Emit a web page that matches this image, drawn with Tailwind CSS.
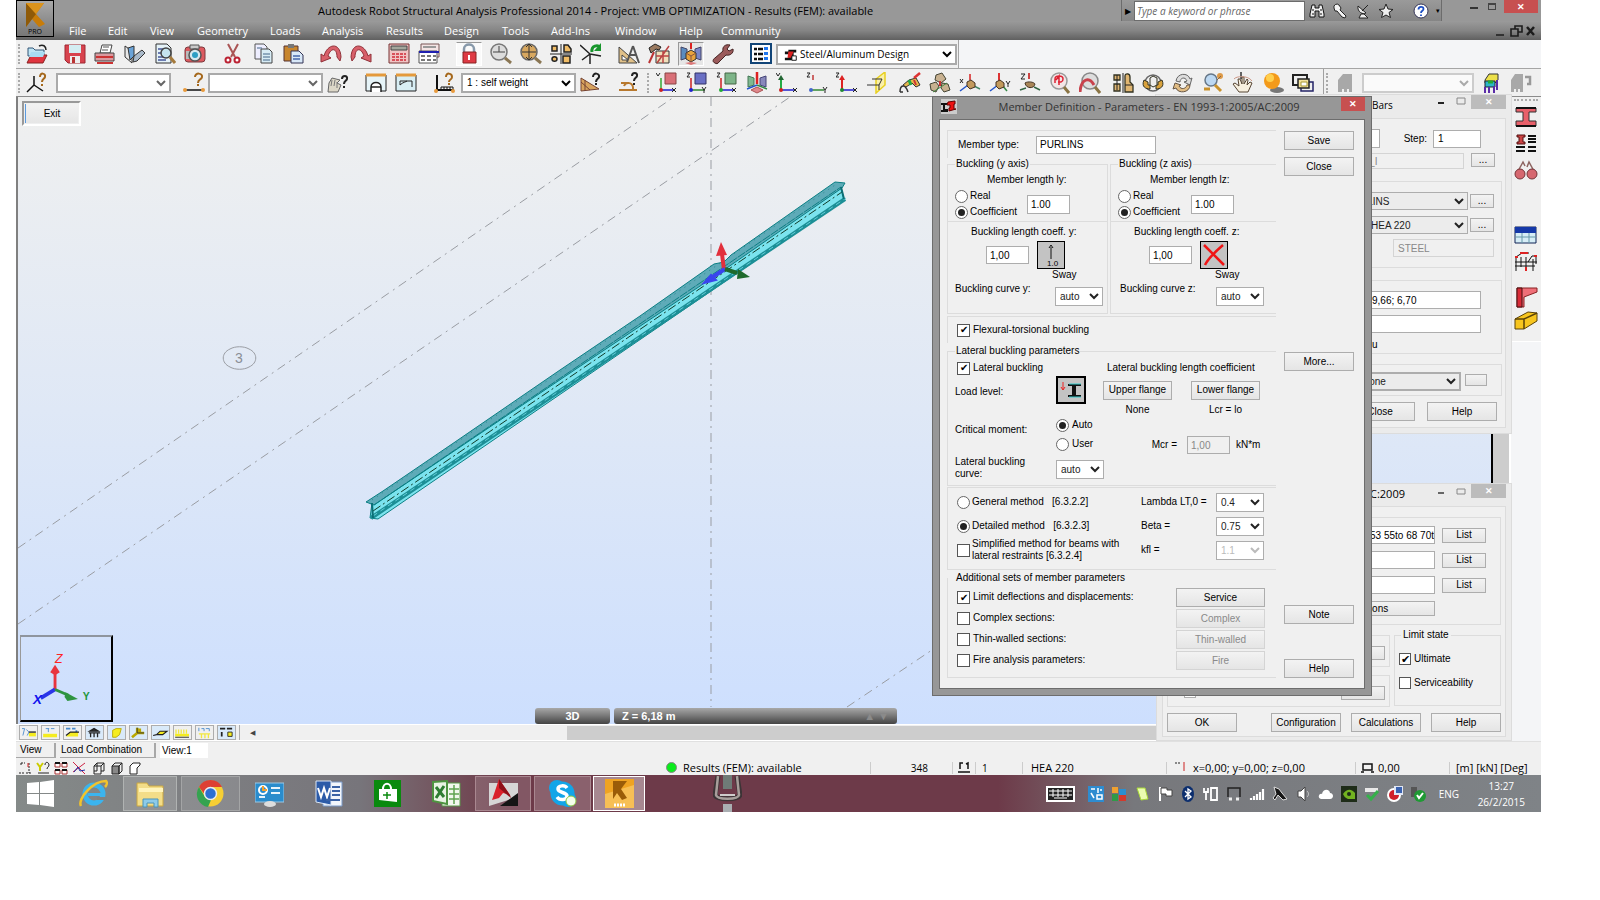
<!DOCTYPE html>
<html lang="en">
<head>
  <meta charset="UTF-8" />
  <meta name="viewport" content="width=device-width, initial-scale=1.0" />
  <title>Autodesk Robot Structural Analysis Professional 2014</title>
  <script src="https://cdn.jsdelivr.net/npm/@tailwindcss/browser@4"></script>
</head>
<body class="bg-white">
<div class="relative ml-4 mr-[59px] overflow-hidden bg-[#f0f0f0] font-['Liberation_Sans',Arial,sans-serif] text-[10px] leading-3 text-black">

  <!-- Title bar -->
  <header class="relative bg-[#989898] font-['Open_Sans','Noto_Sans',sans-serif]">
    <div class="flex h-[21px] items-center">
      <h1 class="flex-1 whitespace-nowrap pl-[302px] text-[11px]">Autodesk Robot Structural Analysis Professional 2014 - Project: VMB OPTIMIZATION - Results (FEM): available</h1>
      <div class="flex h-[21px] w-[321px] items-center border-x border-[#6c6c6c] bg-linear-to-b from-[#9a9a9a] to-[#858585]">
        <span class="w-3 text-center text-[8px]">&#9654;</span>
        <input type="text" aria-label="Search" placeholder="Type a keyword or phrase" class="h-[20px] w-[171px] border border-[#6c6c6c] bg-white px-0.5 text-[10px] italic placeholder:text-[#666]" />
        <div class="flex flex-1 items-center gap-[7px] pl-1 [&>svg]:size-4">
          <svg viewBox="0 0 16 16"><path d="M3 2h3v3h4V2h3l2 9v3h-5V8H6v6H1v-3z" fill="#eee" stroke="#111"/><path d="M3 7h2M11 7h2M3 11h2M11 11h2" stroke="#111"/></svg>
          <svg viewBox="0 0 16 16"><path d="M2 5a3 3 0 0 1 5-3l2 3-1 2 6 6-1 2-3-1-5-6-2 0z" fill="#f4f4f4" stroke="#222"/></svg>
          <svg viewBox="0 0 16 16"><path d="M3 3l8 7c-3 2-9-1-8-7z" fill="#eee" stroke="#222"/><path d="M7 8l6-6" stroke="#222"/><path d="M6 11l-2 4h9l-4-4z" fill="#eee" stroke="#222"/></svg>
          <svg viewBox="0 0 16 16"><path d="M8 1l2 5 5 .5-4 3 1.500 5L8 12l-4.500 2.500L5 9.500l-4-3L6 6z" fill="#eee" stroke="#222"/></svg>
          <svg viewBox="0 0 16 16" class="ml-3"><circle cx="8" cy="8" r="7" fill="#fff" stroke="#335"/><path d="M5.500 6.500C5.500 3 10.500 3 10.500 6c0 2-2.500 1.500-2.500 4M8 11.500v1.500" fill="none" stroke="#1d4fc4" stroke-width="1.800"/></svg>
          <span class="text-[7px]">&#9662;</span>
        </div>
      </div>
      <div class="flex h-[21px] w-[99px] items-start pl-6">
        <button aria-label="Minimize" class="h-4 w-4"><span class="mx-auto mt-0 block h-0.5 w-2 bg-[#333]"></span></button>
        <button aria-label="Maximize" class="h-4 w-5"><span class="mx-auto mb-1 block h-[7px] w-2 border border-t-2 border-[#444]"></span></button>
        <button aria-label="Close" class="ml-[2px] h-[13px] w-[34px] bg-[#c75050] text-[9px] leading-3 font-bold text-white">&#10005;</button>
      </div>
    </div>
    <nav class="flex h-[19px] items-center bg-linear-to-b from-[#9a9a9a] via-[#858585] to-[#606060] pl-[53px] text-[11px] text-white">
      <a href="#" class="w-[39px]">File</a><a href="#" class="w-[42px]">Edit</a><a href="#" class="w-[47px]">View</a><a href="#" class="w-[73px]">Geometry</a><a href="#" class="w-[52px]">Loads</a><a href="#" class="w-[64px]">Analysis</a><a href="#" class="w-[58px]">Results</a><a href="#" class="w-[58px]">Design</a><a href="#" class="w-[49px]">Tools</a><a href="#" class="w-[64px]">Add-Ins</a><a href="#" class="w-[64px]">Window</a><a href="#" class="w-[42px]">Help</a><a href="#" class="flex-1">Community</a>
      <svg class="mr-[5px] h-3 w-10" viewBox="0 0 40 12"><path d="M0 10h8M15 4h7v7h-7zM19 4V1h7v6h-4" fill="none" stroke="#1c1c1c" stroke-width="1.600"/><path d="M31 2l7 8M38 2l-7 8" stroke="#1c1c1c" stroke-width="2.500"/></svg>
    </nav>
    <div class="absolute top-0 left-0 flex h-[37px] w-[38px] flex-col items-center border border-black bg-linear-to-b from-[#aaa] to-[#777]">
      <svg class="mt-0.5 h-[25px] w-6" viewBox="0 0 24 25"><path d="M3 0h18L13 11l9 10-6 3-7-8-6 8z" fill="#c87c08"/><path d="M3 0l10 11-10 13z" fill="#8f5a08"/><path d="M21 0h-9l-9 0 10 11z" fill="#dc941c"/></svg>
      <span class="text-[7px] leading-[8px]">PRO</span>
    </div>
  </header>

  <!-- Standard toolbar -->
  <div class="flex h-[29px] items-center border-b border-[#a5a5a5] bg-[#f4f5f7]">
    <div class="flex h-[28px] items-center gap-4 border-r border-[#a5a5a5] bg-[#f0f0f0] pr-px [&_svg]:size-[22px] [&_svg]:shrink-0">
      <span class="-mr-2.5 ml-0.5 h-5 w-0.5 border-l-2 border-dotted border-[#aaa]"></span>
      <svg viewBox="0 0 22 22"><path d="M2 5h5l2 2h9v6H2z" fill="#bfe6f5" stroke="#357"/><path d="M1 20l4-8h16l-4 8z" fill="#e0353f" stroke="#822"/><path d="M5 9h14l-2 5H3z" fill="#a9dcf2"/><path d="M13 3c4-2 7 0 7 4" fill="none" stroke="#222" stroke-width="1.500"/></svg>
      <div class="flex gap-2">
        <svg viewBox="0 0 22 22"><path d="M1 2h20v18H4l-3-3z" fill="#d8434e" stroke="#9c2832"/><path d="M5 2h12v8H5z" fill="#d4edf2"/><path d="M6 13h10v7H6z" fill="#eee"/><path d="M8 14h3v6H8z" fill="#b33"/></svg>
        <svg viewBox="0 0 22 22"><path d="M6 10l2-8h10l-2 8z" fill="#fff" stroke="#444"/><path d="M9 4h6M8 7h6" stroke="#555"/><path d="M1 10h19v8H1z" fill="#d99aa0" stroke="#444"/><path d="M2 14h17M3 20h16" stroke="#c33" stroke-width="2"/></svg>
        <svg viewBox="0 0 22 22"><path d="M1 3l7 5v12L1 14z" fill="#e8e8e8" stroke="#333"/><path d="M4 5l6-2v10l-4 4z" fill="#6aa3d8" stroke="#333"/><path d="M10 13l8-6 3 3-8 8-4 1z" fill="#a9b9c9" stroke="#333"/></svg>
        <svg viewBox="0 0 22 22"><path d="M2 1h11l4 4v15H2z" fill="#e5f2f8" stroke="#333"/><path d="M4 6h8M4 10h7M4 14h8M4 17h8" stroke="#459" stroke-width="1.500"/><circle cx="12" cy="10" r="5" fill="#c5e4ee" stroke="#444" stroke-width="1.500"/><path d="M16 14l5 6" stroke="#a57a3c" stroke-width="3"/></svg>
        <svg viewBox="0 0 22 22"><rect x="1" y="4" width="20" height="15" rx="3" fill="#dc5a60" stroke="#7c3a3e"/><path d="M6 2h9v4H6z" fill="#c9c9c9" stroke="#555"/><path d="M2 8h4v8H2z" fill="#bbb"/><circle cx="11" cy="12" r="6" fill="#d6e9ef" stroke="#555" stroke-width="1.500"/><circle cx="11" cy="12" r="3" fill="#2c9fc4"/></svg>
      </div>
      <div class="flex gap-2">
        <svg viewBox="0 0 22 22"><path d="M6 1l7 13M16 1L9 14" stroke="#a55" stroke-width="2"/><circle cx="6" cy="17" r="2.500" fill="#fff" stroke="#b23" stroke-width="2"/><circle cx="15" cy="17" r="2.500" fill="#fff" stroke="#b23" stroke-width="2"/></svg>
        <svg viewBox="0 0 22 22"><path d="M3 1h9l3 3v12H3z" fill="#eef" stroke="#555"/><path d="M9 6h8l3 3v11H9z" fill="#d8ecf5" stroke="#444"/><path d="M11 11h7M11 14h7M11 17h7M5 5h5" stroke="#468"/></svg>
        <svg viewBox="0 0 22 22"><path d="M2 3h14v15H2z" fill="#c8862e" stroke="#533"/><path d="M6 1h6v4H6z" fill="#777"/><path d="M9 8h8l4 4v8H9z" fill="#d8e8f8" stroke="#335"/><path d="M11 13h7M11 16h7" stroke="#46a" stroke-width="1.500"/></svg>
      </div>
      <div class="flex gap-2">
        <svg viewBox="0 0 22 22"><path d="M1 19v-8l3 2C7 1 20-2 21 14l-1 4-3-4C17 5 11 4 8 13l3 2z" fill="#d8606a" stroke="#903038"/></svg>
        <svg viewBox="0 0 22 22"><path d="M21 19v-8l-3 2C15 1 2-2 1 14l1 4 3-4C5 5 11 4 14 13l-3 2z" fill="#d8606a" stroke="#903038"/></svg>
      </div>
      <div class="flex gap-2">
        <svg viewBox="0 0 22 22"><path d="M1 1h20v19H1z" fill="#f0c4c4" stroke="#733"/><path d="M3 3h16v4H3z" fill="#a4a69c" stroke="#444"/><path d="M4 11h14M4 14h14M4 17h14" stroke="#d8505a" stroke-width="2" stroke-dasharray="3 1"/></svg>
        <svg viewBox="0 0 22 22"><path d="M3 1h18v13H3z" fill="#f4e4e4" stroke="#755"/><path d="M5 4h13" stroke="#999" stroke-width="2"/><path d="M1 8h18v12H1z" fill="#fff" stroke="#555"/><path d="M1 9h20" stroke="#2020b0" stroke-width="2"/><path d="M3 13h15M3 17h15" stroke="#777" stroke-width="2" stroke-dasharray="4 2"/></svg>
      </div>
      <div class="flex items-center gap-2">
        <button aria-label="Lock results" class="flex h-6 w-[26px] items-center justify-center border border-white border-t-[#999] bg-[#fafafa]"><svg viewBox="0 0 22 22"><path d="M6 10V6c0-6 10-6 10 0v4" fill="none" stroke="#89a" stroke-width="2.500"/><path d="M5 9h13v11H5z" fill="#de3a44" stroke="#822"/><path d="M11 12v5" stroke="#fff" stroke-width="2"/></svg></button>
        <svg viewBox="0 0 22 22"><circle cx="9" cy="9" r="8" fill="#dcdcdc" stroke="#777" stroke-width="1.500"/><path d="M3 9h12M9 3v6" stroke="#444"/><path d="M15 15l6 5" stroke="#8a7654" stroke-width="3"/></svg>
        <svg viewBox="0 0 22 22"><circle cx="9" cy="9" r="8" fill="#d8a860" stroke="#666" stroke-width="1.500"/><path d="M2 9h14M9 2v14M6 4l3-3 3 3M6 14l3 3 3-3" fill="none" stroke="#333"/><path d="M15 15l6 5" stroke="#8a7654" stroke-width="3"/></svg>
        <svg viewBox="0 0 22 22"><path d="M2 3h5v5H2zM14 2h4l3 4v3h-7zM2 16c0-3 5-3 5 0s-5 3-5 0zM13 13h7v7h-7z" fill="#f1bd67" stroke="#222" stroke-width="1.500"/><path d="M0 11h22M11 1v20" stroke="#222"/></svg>
        <svg viewBox="0 0 22 22"><path d="M0 2l10 9v10M10 11L21 13M10 11L2 17" fill="none" stroke="#222" stroke-width="1.500"/><path d="M12 9c-1-7 6-7 8-5" fill="none" stroke="#18962c" stroke-width="3"/><path d="M21 0v8h-7z" fill="#18962c"/></svg>
      </div>
      <div class="flex items-center gap-2">
        <svg viewBox="0 0 22 22"><path d="M1 4v16h18z" fill="#e0c088" stroke="#444"/><path d="M4 12v5h6z" fill="#fff" stroke="#444"/><path d="M15 3l-6 16M15 3l6 17M12 12h6" fill="none" stroke="#555" stroke-width="2"/></svg>
        <svg viewBox="0 0 22 22"><path d="M8 8h13v12H8z" fill="#f1dfbb" stroke="#333"/><path d="M9 20L21 3M8 13h13M15 8v12" stroke="#b44" stroke-width="1.500"/><path d="M1 5l6-4 6 3-2 3-3-1-5 4z" fill="#9a7a60" stroke="#222"/><path d="M6 9L1 20" stroke="#b33" stroke-width="2"/></svg>
        <button aria-label="Display" class="flex h-6 w-[26px] items-center justify-center border border-white border-t-[#999] border-l-[#999] bg-[#e6e6e6]"><svg viewBox="0 0 22 22"><path d="M1 4l6 2v9l-6 2z" fill="#5a8cc0" stroke="#446"/><path d="M21 4l-6 2v9l6 2z" fill="#7a86c8" stroke="#446"/><path d="M6 10l5-3 5 3v6l-5 3-5-3z" fill="#e8a33c" stroke="#333"/><path d="M11 13v6M6 10l5 3 5-3" fill="none" stroke="#854"/><path d="M11 0v6" stroke="#d22" stroke-width="2"/><path d="M5 20l6-1 6 1-6 2z" fill="#d77"/></svg></button>
        <svg viewBox="0 0 22 22"><path d="M3 20c-3-1-2-4 0-5l8-7c-1-5 3-7 7-6l-3 4 2 2 4-2c1 4-3 7-7 6l-7 7c-1 2-3 2-4 1z" fill="#9b5a5a" stroke="#422"/></svg>
      </div>
      <div class="flex items-center gap-1">
        <svg viewBox="0 0 22 22"><path d="M1 1h20v19H1z" fill="#fff" stroke="#147" stroke-width="2"/><path d="M4 6h3M4 11h3M4 16h3M8 6h5M8 11h5M8 16h5" stroke="#111" stroke-width="2.500"/><path d="M16 4v14" stroke="#27e" stroke-width="4" stroke-dasharray="3 2"/></svg>
        <div class="relative">
          <select aria-label="Layout" class="h-[21px] w-[181px] border-2 border-[#aaa] bg-white pl-[18px] font-['Open_Sans',sans-serif] text-[10px]"><option>Steel/Aluminum Design</option></select>
          <svg class="absolute top-0 left-1 p-1" viewBox="0 0 16 16"><path d="M5 2h9v3h-3v4l3 1v4H1v-3h4V7H1V4h4z" fill="#111"/><path d="M5 4h6l-3 7H4z" fill="#d22"/><path d="M9 9h5v5H9z" fill="#fff" stroke="#111"/></svg>
        </div>
      </div>
    </div>
  </div>

  <!-- Selection and view toolbar -->
  <div class="flex h-7 items-center border-b border-[#8b8b8b] bg-[#f0f0f0] [&_svg]:size-[22px] [&_svg]:shrink-0">
    <span class="mr-1.5 ml-0.5 h-5 w-0.5 border-l-2 border-dotted border-[#aaa]"></span>
    <svg viewBox="0 0 22 22"><path d="M8 4v9l-7 7M8 13l9 6" fill="none" stroke="#111" stroke-width="1.500"/><path d="M14 5c0-5 6-4 5 0-.5 2-3 2-3 5M16 12v2" fill="none" stroke="#a5681c" stroke-width="2"/></svg>
    <select aria-label="Nodes" class="ml-2 h-[20px] w-[115px] border-2 border-[#aaa] bg-white text-[10px] text-[#666]"><option></option></select>
    <svg class="ml-3" viewBox="0 0 22 22"><path d="M2 18h18" stroke="#111" stroke-width="1.500"/><circle cx="2" cy="18" r="2" fill="#e89a3c"/><circle cx="20" cy="18" r="2" fill="#e89a3c"/><path d="M12 5c0-5 8-4 7 0-.5 3-4 2-4 6M15 12v2" fill="none" stroke="#a5681c" stroke-width="2"/></svg>
    <select aria-label="Bars" class="ml-[3px] h-[20px] w-[115px] border-2 border-[#aaa] bg-white text-[10px] text-[#666]"><option></option></select>
    <svg class="ml-1" viewBox="0 0 22 22"><path d="M1 20l1-9 3-5 8 2-3 3 4 2-3 7z" fill="#ddd8c8" stroke="#666"/><path d="M5 8l-1 6M8 8l-1 6M10 10v6" stroke="#777"/><path d="M15 7c0-4 6-4 5 0-.5 2-3 2-3 5M17 14v2" fill="none" stroke="#222" stroke-width="2"/></svg>
    <svg class="ml-4" viewBox="0 0 22 22"><path d="M1 3h20v16H1z" fill="#e6f4f8" stroke="#222"/><path d="M1 3h20" stroke="#e49a3c" stroke-width="3"/><path d="M6 20v-5c0-6 10-6 10 0v5M6 15h10" fill="#fff" stroke="#222" stroke-width="1.500"/></svg>
    <svg class="ml-2" viewBox="0 0 22 22"><path d="M1 3h20v16H1z" fill="#d8eef4" stroke="#222"/><path d="M1 3h20" stroke="#e49a3c" stroke-width="3"/><path d="M5 13V9h12v6M5 13c3-3 6-3 7-4" fill="none" stroke="#222"/></svg>
    <svg class="ml-4" viewBox="0 0 22 22"><path d="M4 3v15h17" fill="none" stroke="#111" stroke-width="2"/><path d="M8 15h12v3H8zM11 15v4M14 15v4M17 15v4" stroke="#111" fill="none"/><circle cx="3" cy="19" r="2" fill="#e89a3c"/><circle cx="20" cy="19" r="2" fill="#e89a3c"/><path d="M13 5c0-5 6-4 6 0 0 3-3 2-3 5M16 11v2" fill="none" stroke="#a5681c" stroke-width="2"/></svg>
    <select aria-label="Load case" class="ml-1.5 h-[20px] w-[115px] border-2 border-[#aaa] bg-white text-[10px]"><option>1 : self weight</option></select>
    <svg class="ml-1" viewBox="0 0 22 22"><path d="M1 6l18 11-18 2z" fill="#d8a45e" stroke="#743"/><path d="M1 10l9 8M5 8v11" stroke="#743"/><path d="M13 5c0-5 7-4 6 0-.5 2-3 2-3 5M16 11v2" fill="none" stroke="#222" stroke-width="2"/></svg>
    <svg class="ml-4" viewBox="0 0 22 22"><path d="M1 18h18M6 14c2-5 10-4 9 4M3 11h8" fill="none" stroke="#b8792e" stroke-width="2"/><path d="M14 4c0-4 6-4 5 0-.5 2-3 2-3 5M16 11v2" fill="none" stroke="#222" stroke-width="2"/></svg>
    <span class="mx-[7px] h-5 w-0.5 border-l-2 border-dotted border-[#aaa]"></span>
    <div class="flex flex-1 gap-[11px]">
      <div class="flex gap-2">
        <svg viewBox="0 0 22 22"><path d="M9 1h11v11H9z" fill="#d97078" stroke="#844"/><path d="M5 6v12" stroke="#3a3" stroke-width="1.500"/><path d="M5 18h14" stroke="#22c" stroke-width="1.500"/><path d="M0 1l2 3 2-3M16 16l4 4M20 16l-4 4" fill="none" stroke="#222"/><circle cx="5" cy="18" r="2" fill="#c22"/></svg>
        <svg viewBox="0 0 22 22"><path d="M9 1h11v11H9z" fill="#6a6fc4" stroke="#336"/><path d="M5 6v12" stroke="#c22" stroke-width="1.500"/><path d="M5 18h14" stroke="#383" stroke-width="1.500"/><path d="M1 1h3l-3 4h3M16 15l2 3 2-3M18 18v3" fill="none" stroke="#222"/><circle cx="5" cy="18" r="2" fill="#22c"/></svg>
        <svg viewBox="0 0 22 22"><path d="M9 1h11v11H9z" fill="#7db488" stroke="#464"/><path d="M5 6v12" stroke="#c22" stroke-width="1.500"/><path d="M5 18h14" stroke="#22c" stroke-width="1.500"/><path d="M1 1h3l-3 4h3M16 16l4 4M20 16l-4 4" fill="none" stroke="#222"/><circle cx="5" cy="18" r="2" fill="#2a3"/></svg>
        <svg viewBox="0 0 22 22"><path d="M2 4l6 2v7l-6 2z" fill="#7fb890" stroke="#475"/><path d="M20 4l-6 2v7l6 2z" fill="#88b" stroke="#447"/><path d="M11 0v12" stroke="#d22" stroke-width="2.500"/><path d="M11 13l-10 4" stroke="#25c" stroke-width="1.500"/><path d="M11 13l10 4" stroke="#384" stroke-width="1.500"/><path d="M5 18l6-3 6 3-6 3z" fill="#e0888c" stroke="#a55"/></svg>
        <svg viewBox="0 0 22 22"><path d="M5 6v12" stroke="#2a4" stroke-width="2"/><path d="M5 18h13" stroke="#22c" stroke-width="1.500"/><path d="M2 8l3-5 3 5z" fill="#263"/><path d="M0 1l2 3 2-3M17 16l4 4M21 16l-4 4" fill="none" stroke="#222"/><circle cx="5" cy="18" r="2" fill="#c22"/></svg>
        <svg viewBox="0 0 22 22"><path d="M7 3v5" stroke="#c66" stroke-width="2"/><path d="M5 18h13" stroke="#383" stroke-width="1.500"/><path d="M1 1h3l-3 4h3M17 15l2 3 2-3M19 18v3" fill="none" stroke="#222"/><circle cx="5" cy="18" r="2" fill="#46c"/></svg>
        <svg viewBox="0 0 22 22"><path d="M6 5v13" stroke="#d22" stroke-width="2"/><path d="M6 18h12" stroke="#22c" stroke-width="1.500"/><path d="M3 8l3-5 3 5z" fill="#d22"/><path d="M0 1h3l-3 4h3M17 16l4 4M21 16l-4 4" fill="none" stroke="#222"/><circle cx="6" cy="18" r="2" fill="#283"/></svg>
        <svg viewBox="0 0 22 22"><path d="M10 7l9-7v13l-9 8z" fill="#faf0a8" stroke="#e8d020" stroke-width="1.500"/><path d="M1 13h12l3-6H6M13 13v5" fill="none" stroke="#333"/></svg>
      </div>
      <div class="flex gap-2">
        <svg viewBox="0 0 22 22"><path d="M1 20C1 13 6 11 9 20M1 20h3" fill="none" stroke="#333" stroke-width="1.500"/><path d="M4 13l6-5 7-2 4 7-4 2-4-4-6 4z" fill="#e6b84e" stroke="#333"/><path d="M10 8l2 5" stroke="#2a4" stroke-width="3"/><path d="M15 8l2 5" stroke="#c33" stroke-width="2"/><path d="M15 6l6-5" stroke="#d33" stroke-width="2.500"/></svg>
        <svg viewBox="0 0 22 22"><path d="M7 3l6-2 4 6-5 4-6-3zM1 12l6-2 3 4-3 6-5-2zM13 11l6 1 2 6-6 2-3-4z" fill="#c8b190" stroke="#443"/><path d="M11 9v5" stroke="#c33" stroke-width="2"/><path d="M4 20l14-9" stroke="#484"/></svg>
        <svg viewBox="0 0 22 22"><path d="M11 2v6" stroke="#d55" stroke-width="2"/><path d="M1 19l8-6" stroke="#25c" stroke-width="1.500"/><path d="M21 17l-8-4" stroke="#486" stroke-width="1.500"/><path d="M8 10l4-2 4 3v4l-5 2-3-3z" fill="#c29a5c" stroke="#432"/><path d="M1 7l3 4M4 7l-3 4" stroke="#222"/></svg>
        <svg viewBox="0 0 22 22"><path d="M10 1v8" stroke="#d33" stroke-width="2"/><path d="M1 19l8-6" stroke="#25c" stroke-width="1.500"/><path d="M18 19l-5-6" stroke="#384" stroke-width="1.500"/><path d="M7 10l4-2 4 3v4l-5 2-3-3z" fill="#c29a5c" stroke="#432"/><path d="M17 9l2 3 2-3M19 12v3" fill="none" stroke="#222"/></svg>
        <svg viewBox="0 0 22 22"><path d="M10 1v6" stroke="#c44" stroke-width="2"/><path d="M1 18l6-2M15 15l6 3" stroke="#364" stroke-width="1.500"/><path d="M6 11c3-2 9-1 10 1-1 5-9 5-10-1z" fill="#a88658" stroke="#432"/><path d="M2 2h4l-4 5h4" fill="none" stroke="#222"/></svg>
        <svg viewBox="0 0 22 22"><circle cx="10" cy="9" r="8" fill="#f3e6e6" stroke="#999" stroke-width="1.500"/><path d="M10 13V4l-3 4M6 11V7c0-4 8-4 8 0s-4 3-5 3" fill="none" stroke="#d23" stroke-width="1.500"/><path d="M15 15l5 6" stroke="#8a7444" stroke-width="3"/></svg>
        <svg viewBox="0 0 22 22"><circle cx="11" cy="9" r="8" fill="#ddd" stroke="#888" stroke-width="1.500"/><path d="M1 20c1-13 9-16 14-7" fill="none" stroke="#c8424c" stroke-width="3"/><path d="M16 15l5 6" stroke="#8a7444" stroke-width="3"/></svg>
      </div>
      <div class="flex gap-2">
        <svg viewBox="0 0 22 22"><path d="M2 3h6v5H2zM2 12h6v7H2zM13 4c0-3 5-3 5 1v5l3 3v7h-8z" fill="#e0b672" stroke="#332" stroke-width="1.300"/><path d="M11 1v20M5 3v15M13 13h8" stroke="#222"/></svg>
        <svg viewBox="0 0 22 22"><circle cx="11" cy="11" r="8" fill="none" stroke="#666" stroke-width="1.500"/><path d="M2 8c-3 7 2 9 6 9v-4H6v-3zM20 8c3 7-2 9-6 9v-4h2v-3z" fill="#d9a23c" stroke="#332"/><path d="M8 6l3-2 4 2v7l-4 2-3-2z" fill="#eee" stroke="#332"/></svg>
        <svg viewBox="0 0 22 22"><path d="M4 9C5 1 16 0 18 7l2-1-2 7-6-3 3-1c-2-5-7-3-7 1z" fill="#ddd" stroke="#666"/><path d="M18 13c0 8-12 9-14 3l-3 1 2-6 6 2-2 1c2 4 7 3 8-1z" fill="#e2bd84" stroke="#654"/></svg>
        <svg viewBox="0 0 22 22"><circle cx="9" cy="8" r="6" fill="#bcd8f2" stroke="#678" stroke-width="1.500"/><path d="M13 13l6 6M2 17h6" stroke="#c9922c" stroke-width="3"/><circle cx="18" cy="4" r="3" fill="#dd9a48"/><path d="M15 8l4-4" stroke="#864"/></svg>
        <svg viewBox="0 0 22 22"><path d="M7 20L1 12l2-1 4 3-1-7h2l2 5V5h2v7l3-5 1 1-1 5 3-3 2 1-4 9z" fill="#f8f0df" stroke="#543"/><path d="M9 0v7" stroke="#333" stroke-width="1.500"/><path d="M2 7c2-3 14-4 18 2" fill="none" stroke="#c98"/></svg>
        <svg viewBox="0 0 22 22"><ellipse cx="15" cy="18" rx="7" ry="3" fill="#777"/><circle cx="10" cy="9" r="8" fill="#f39a1a"/><circle cx="8" cy="6" r="4" fill="#ffcf4d"/></svg>
        <svg viewBox="0 0 22 22"><path d="M1 3h14v10H1z" fill="none" stroke="#222" stroke-width="2"/><path d="M9 10h12v9H9z" fill="none" stroke="#226" stroke-width="1.500"/><path d="M6 7h11v9H6z" fill="#f3e29c" stroke="#222" stroke-width="1.500"/><path d="M9 10h6v4H9z" fill="#fff" stroke="#a93"/></svg>
      </div>
    </div>
    <span class="h-7 border-l border-[#a0a0a0]"></span><span class="mr-1.5 ml-0.5 h-5 w-0.5 border-l-2 border-dotted border-[#aaa]"></span>
    <svg viewBox="0 0 22 22"><path d="M4 20V8l5-6h9v18h-3v-3h-2v3h-3v-3H8v3z" fill="#a8a8a8"/></svg>
    <select aria-label="Storey" disabled class="ml-1.5 h-[20px] w-[112px] border-2 border-[#ccc] bg-[#fafafa] text-[10px] text-[#aaa]"><option></option></select>
    <svg class="ml-1.5" viewBox="0 0 22 22"><path d="M5 8l4-6h9v6l-3 3H5z" fill="#ece04a" stroke="#333"/><path d="M5 9h10v6H5z" fill="#2cb5c9" stroke="#223"/><path d="M5 15v6M9 15v6M14 14v7M17 8v10" stroke="#5a2ca8" stroke-width="2"/><path d="M8 10h5" stroke="#2a3" stroke-width="3"/></svg>
    <svg class="mr-[9px] ml-2" viewBox="0 0 22 22"><path d="M1 20V8l4-6h8v18h-3v-3H8v3H6v-3H4v3z" fill="#a8a8a8"/><path d="M15 5h5v7h-3" fill="none" stroke="#999" stroke-width="2.500"/></svg>
  </div>

  <!-- Work area -->
  <main class="flex">
    <section class="min-w-0 flex-1">
      <div class="flex">
        <div class="relative h-[627px] min-w-0 flex-1 overflow-hidden border-r-2 border-l-2 border-r-black border-l-[#808080] bg-linear-to-b from-[#f0f0ef] via-[#dfe8f6] to-[#cddffe]">
          <svg class="absolute top-0 left-0 h-[627px] w-[1476px]" viewBox="18 97 1476 627">
            <g fill="none" stroke="#9a9da3" stroke-dasharray="9 5 2 5">
              <path d="M18 548L674 97M18 624L790 97M711 97V707M847 707L932 650"/>
            </g>
            <path d="M230 349c5-3 14-3 19 0 9 4 9 14 0 18-5 3-14 3-19 0-9-4-9-14 0-18z" fill="none" stroke="#9a9da3"/>
            <text x="239" y="363" text-anchor="middle" font-size="14" fill="#8b8f96">3</text>
            <!-- I-beam -->
            <path d="M372 503L716 272 841 188l3 12L378 519l-8-1z" fill="#7be3ee" stroke="#0d8186"/>
            <path d="M366 502L383 491 455 442 560 370 640 316 714 264 724 262 731 255 835 182l10 1-3 5-121 84-145 97-202 136z" fill="#5eabb8" stroke="#0b7f84"/>
            <path d="M371 518L845 199" stroke="#1c8f96" stroke-width="4"/>
            <path d="M373 516L846 198" stroke="#63ccd8" stroke-dasharray="5 4"/>
            <path d="M374 505L841 187" stroke="#0b7f84" stroke-dasharray="9 1"/>
            <path d="M372 500L838 183" stroke="#2a858c" stroke-dasharray="1 5"/>
            <path d="M373 511L842 192" stroke="#123c28" stroke-dasharray="9 3 2 3"/>
            <path d="M372 503l1 15M841 187l3 12" stroke="#0b6f76" stroke-width="2"/>
            <!-- local axes -->
            <path d="M724 270l-2-16" stroke="#e2303c" stroke-width="4"/><path d="M716 256l5-14 6 13z" fill="#e2303c"/>
            <path d="M725 269l-14 9" stroke="#3a44ee" stroke-width="4"/><path d="M704 283l7-8 5 5z" fill="#3a44ee" stroke="#3a44ee" stroke-width="2"/>
            <path d="M725 269l12 4" stroke="#1f6a2c" stroke-width="4"/><path d="M738 269l12 8-13 2z" fill="#1f6a2c"/>
          </svg>
          <div class="absolute top-1 left-1 border-2 border-t-[#999] border-r-white border-b-white border-l-[#999] p-px">
            <button class="h-[19px] w-[53px] border-l border-[#5b9ade] bg-linear-to-b from-[#f2f2f2] to-[#e6e6e6] text-[10px]">Exit</button>
          </div>
          <svg class="absolute top-[538px] left-0.5 h-[87px] w-[93px] border-t-2 border-r-2 border-b-2 border-l border-t-[#8f959e] border-r-black border-b-black border-l-[#999]" viewBox="0 0 93 87">
            <path d="M35 55V34" stroke="#e8343e" stroke-width="3"/><path d="M30 37l5-8 5 8-5 3z" fill="#e8343e"/>
            <path d="M35 55l-15 9" stroke="#2a35e8" stroke-width="4"/><path d="M35 55l14 6" stroke="#2e9440" stroke-width="3"/><path d="M46 58l13 7-11 2-3-4z" fill="#2e9440"/>
            <text x="35" y="27" font-size="13" font-style="italic" fill="#f22">Z</text>
            <text x="12" y="70" font-size="14" font-weight="bold" font-style="italic" fill="#1212ee">X</text>
            <text x="64" y="66" font-size="11" font-weight="bold" fill="#23963a">Y</text>
          </svg>
          <div class="absolute top-[611px] left-[517px] flex h-4 gap-1 text-[11px] font-bold text-white [&>div]:rounded-[3px] [&>div]:bg-linear-to-b [&>div]:from-[#a8a8a8] [&>div]:via-[#777] [&>div]:to-[#444]">
            <div class="w-[75px] text-center leading-4">3D</div>
            <div class="flex w-[283px] items-center justify-between px-2 leading-4"><span>Z = 6,18 m</span><span class="text-[11px] text-[#8a8a8a]">&#9650; &#9660;</span></div>
          </div>
        </div>
        <div class="w-4 bg-[#cdcdcd]"></div>
        <div class="w-0.5 bg-white"></div>
      </div>
      <div class="flex h-[17px] items-center gap-[3px] border-y border-[#fff] bg-[#f0f0f0] pl-[3px] [&>svg]:h-[15px] [&>svg]:w-[19px] [&>svg]:border [&>svg]:border-[#adadad]">
        <svg viewBox="0 0 19 15"><path d="M2 3h3l-2 8M7 4l3 3-2 4" fill="none" stroke="#48c"/><path d="M10 8h8v4h-8z" fill="#f5ec20"/><path d="M10 7h8" stroke="#222" stroke-width="1.500"/></svg>
        <svg viewBox="0 0 19 15"><path d="M4 3h4M10 3h4M7 3v4" stroke="#48c"/><path d="M1 9h16v4H1z" fill="#f5ec20"/></svg>
        <svg viewBox="0 0 19 15"><path d="M2 3h5M9 3h4M14 5v3" stroke="#48c" stroke-width="2"/><path d="M2 12l5-5h9v5z" fill="#f5ec20"/><path d="M2 11l5-4h10" fill="none" stroke="#222" stroke-width="1.500"/></svg>
        <svg class="bg-[#d9eafa]" viewBox="0 0 19 15"><path d="M9 3l5 3H4z" fill="#333"/><path d="M3 8h13M5 8v5M9 8v5M13 8v5M9 3l5 3H4z" fill="none" stroke="#222" stroke-width="1.500"/></svg>
        <svg class="bg-[#d9eafa]" viewBox="0 0 19 15"><path d="M5 5l4-2h6l-2 7-4 3H5z" fill="#f5ec20" stroke="#b9a800"/></svg>
        <svg class="bg-[#d9eafa]" viewBox="0 0 19 15"><path d="M8 2v6h8M8 8l-6 5M11 3v5" fill="none" stroke="#b9a800" stroke-width="3"/><path d="M8 2v6h8" fill="none" stroke="#333"/></svg>
        <svg class="bg-[#d9eafa]" viewBox="0 0 19 15"><path d="M1 11l4-1h7l5-4h-8l-4 4" fill="#f5ec20" stroke="#222" stroke-width="1.300"/></svg>
        <svg viewBox="0 0 19 15"><path d="M2 4v5M5 4v5M8 4v5M11 4v5M14 4v5" stroke="#f2e840" stroke-width="1.500"/><path d="M1 9h16v3H1z" fill="#f5ec20"/><path d="M1 13h16" stroke="#222"/></svg>
        <svg viewBox="0 0 19 15"><path d="M3 2v4M6 3h3v3M11 3h4v3" fill="none" stroke="#48c"/><path d="M3 9h13M6 9v5M10 9v5M14 9v5" stroke="#f2e840" stroke-width="1.500"/></svg>
        <svg class="bg-[#d9eafa]" viewBox="0 0 19 15"><path d="M2 3h6M10 3h6M4 7v5" stroke="#222" stroke-width="2"/><path d="M11 7h5v5h-5z" fill="#f5ec20" stroke="#222"/></svg>
        <span class="h-[15px] w-1.5 border-l border-[#adadad]"></span>
        <button aria-label="Scroll left" class="w-2 text-[7px] text-[#444]">&#9664;</button>
        <div class="ml-[308px] h-[14px] flex-1 bg-[#cdcdcd]"></div>
      </div>
    </section>
    <!-- Side toolbar -->
    <aside class="w-[30px] bg-[#f4f5f7]">
      <div class="flex flex-col items-center border-b border-white bg-[#f0f0f0] pb-2 [&>svg]:size-6">
        <span class="mt-0.5 h-0.5 w-6 border-t-2 border-dotted border-[#aaa]"></span>
        <svg class="mt-1" viewBox="0 0 24 24"><path d="M2 3h20v4h-7v9h7v5H2v-5h7V7H2z" fill="#e8606a" stroke="#333"/><path d="M2 3h20M2 21h20" stroke="#111" stroke-width="2"/></svg>
        <svg class="mt-0.5" viewBox="0 0 24 24"><path d="M3 4h8v2H9v5h2v2H3v-2h2V6H3z" fill="#c44" stroke="#511"/><path d="M14 5h8M14 8h8M14 11h8M2 16h9M2 20h9M14 16h8M14 20h8" stroke="#111" stroke-width="2"/></svg>
        <svg class="mt-1" viewBox="0 0 24 24"><path d="M3 14L9 3l2 4M21 14L15 3l-2 5" fill="none" stroke="#8c6460" stroke-width="1.500"/><circle cx="6" cy="15" r="5" fill="#d66870" stroke="#743438"/><circle cx="18" cy="15" r="5" fill="#d66870" stroke="#743438"/></svg>
        <svg class="mt-10" viewBox="0 0 24 24"><path d="M1 4h21v16H1z" fill="#d6edf6" stroke="#125"/><path d="M1 4h21v6H1z" fill="#1538a8"/><path d="M8 10v10M15 10v10M2 14h20" stroke="#69a"/></svg>
        <svg class="mt-0.5" viewBox="0 0 24 24"><path d="M1 13h22M1 17h20M2 8v14M7 8v10M12 8v14M19 10v12M2 8l6-4h7M14 13l4-6h4v8" fill="none" stroke="#111"/><path d="M6 4h8M1 8h3M12 18v4M20 7h3" stroke="#d22" stroke-width="2"/></svg>
        <svg class="mt-3" viewBox="0 0 24 24"><path d="M3 3h20v4l-13 5v10H3z" fill="#ef6f78" stroke="#822"/><path d="M3 3h5v19H3z" fill="#d92c38" stroke="#411"/></svg>
        <svg viewBox="0 0 24 24"><path d="M1 10l13-7 9 1v8l-13 8-9 0z" fill="#f7c51e" stroke="#5a4208"/><path d="M1 10h9l13-6M10 10v10" fill="none" stroke="#5a4208" stroke-width="1.500"/></svg>
      </div>
    </aside>
  </main>

  <!-- View tabs and status bar -->
  <footer class="border-t border-[#e0e0e0] bg-[#f0f0f0]">
    <div class="flex h-[16px] items-end gap-1 [&>button]:h-[15px] [&>button]:border-r-2 [&>button]:border-b [&>button]:border-[#a8a8a8] [&>button]:text-left">
      <button class="w-10 pl-1">View</button><button class="w-24 pl-px">Load Combination</button><button class="w-12 border-none! bg-white pl-0.5">View:1</button>
    </div>
    <div class="flex h-[17px] items-center pt-0.5 pl-0.5 font-['Open_Sans','Noto_Sans',sans-serif] text-[10px] [&_svg]:size-3.5">
      <div class="flex w-[638px] gap-1">
        <svg viewBox="0 0 14 14"><path d="M3 2h4M3 2v3M1 12h5M11 2v10M8 12h5" fill="none" stroke="#222" stroke-dasharray="2 1"/><path d="M10 2v4" stroke="#d22"/></svg>
        <svg viewBox="0 0 14 14"><path d="M1 2l3 4 3-4M4 6v4" stroke="#cc0" stroke-width="2" fill="none"/><path d="M9 4c0-4 4-3 4 0 0 2-2 2-2 4M2 12h11" fill="none" stroke="#222"/></svg>
        <svg viewBox="0 0 14 14"><path d="M1 2h5v4H1zM8 2h5v4H8zM1 9h5v4H1zM8 9h5v4H8z" fill="#fff" stroke="#a33"/><path d="M1 2h5M8 2h5M1 9h5M8 9h5" stroke="#111" stroke-width="2"/></svg>
        <svg viewBox="0 0 14 14"><path d="M1 1l12 12M13 2L1 11" stroke="#c24"/><path d="M2 11l4-5 2 4 5-1" fill="none" stroke="#23a"/></svg>
        <svg class="ml-0.5" viewBox="0 0 14 14"><path d="M2 5h7v8H2zM5 2h7v8H9M2 5l3-3M9 5l3-3M5 2v8H2" fill="none" stroke="#222"/></svg>
        <svg viewBox="0 0 14 14"><path d="M2 5h7v8H2z" fill="#888" stroke="#222"/><path d="M2 5l3-3h7v8l-3 3V5l3-3" fill="none" stroke="#222"/></svg>
        <svg viewBox="0 0 14 14"><path d="M2 5l3-3h7v2l-3 3v6H2z" fill="#fff" stroke="#222"/></svg>
      </div>
      <div class="flex w-[214px] items-center gap-1.5 pl-2.5 whitespace-nowrap text-[11px]"><span class="size-[11px] rounded-full border border-[#888] bg-[#0bec1c]"></span>Results (FEM): available</div>
      <div class="h-3 w-[82px] border-l border-[#ccc] pr-6 text-right">348</div>
      <div class="flex h-3 w-[70px] items-center border-l border-[#ccc] pl-1"><svg viewBox="0 0 14 14"><path d="M3 8V2h3M9 3l2-1v6M1 11h12" fill="none" stroke="#111" stroke-width="1.500"/></svg><span class="ml-1 border-l border-[#ccc] pl-1.5">1</span></div>
      <div class="h-3 w-[144px] border-l border-[#ccc] pl-2 text-[11px]">HEA 220</div>
      <div class="flex h-3 w-[189px] items-center gap-1.5 border-l border-[#ccc] pl-1.5 whitespace-nowrap text-[11px]"><svg viewBox="0 0 14 14"><path d="M2 2h6" stroke="#222" stroke-dasharray="2 1"/><path d="M11 1v9" stroke="#c22"/></svg>x=0,00; y=0,00; z=0,00</div>
      <div class="flex h-3 w-[94px] items-center gap-1 border-l border-[#ccc] pl-1 text-[11px]"><svg viewBox="0 0 14 14"><path d="M3 3h9v6H3zM1 11h3M11 11h3" fill="none" stroke="#111" stroke-width="1.500"/></svg>0,00</div>
      <div class="h-3 flex-1 border-l border-[#ccc] pl-1.5 text-[11px] whitespace-nowrap">[m] [kN] [Deg]</div>
    </div>
  </footer>

  <!-- Windows taskbar -->
  <div class="flex h-[37px] items-center">
    <div class="flex h-full flex-1 items-center bg-linear-to-r from-[#858a89] from-0% via-[#77757b] via-35% to-[#6d3a49] to-50% [&>button]:flex [&>button]:h-[35px] [&>button]:w-[59px] [&>button]:items-center [&>button]:justify-center [&_svg]:size-[29px]">
      <button aria-label="Start" class="w-12!"><svg viewBox="0 0 29 29"><path d="M1 4l12-1v11H1zM14 3l14-2v13H14zM1 15h12v11L1 25zM14 15h14v13l-14-2z" fill="#fff"/></svg></button>
      <button aria-label="Internet Explorer"><svg viewBox="0 0 29 29"><circle cx="15" cy="15" r="9" fill="none" stroke="#3bb4ee" stroke-width="5"/><path d="M9 14h15v3H9z" fill="#3bb4ee"/><path d="M18 18h10v3h-10z" fill="#7f8383"/><path d="M2 27C-2 20 14 2 27 2c2 2 0 5-1 6" fill="none" stroke="#f2c32c" stroke-width="2.500"/></svg></button>
      <button aria-label="File Explorer" class="w-[54px]! border border-[#b0b3b2] bg-white/15"><svg viewBox="0 0 29 29"><path d="M1 4h10l2 3h14v20H1z" fill="#f3dd88" stroke="#c9a640"/><path d="M3 9h24v4H3z" fill="#fff4bb"/><path d="M7 28v-8h15v8h-4v-4h-7v4z" fill="#8dcbea" stroke="#4b93b8"/></svg></button>
      <button aria-label="Chrome" class="ml-1 border border-[#a4a5a6] bg-white/10"><svg viewBox="0 0 29 29"><circle cx="14.500" cy="14.500" r="13" fill="#f6cf34"/><path d="M3 8a13 13 0 0 1 23 0H14l-5 8z" fill="#dd4033"/><path d="M3 8l6 10 6 3-3 7A13 13 0 0 1 3 8z" fill="#35a350"/><circle cx="14.500" cy="14.500" r="6" fill="#2d6fd1" stroke="#eee" stroke-width="1.500"/></svg></button>
      <button aria-label="Control Panel"><svg viewBox="0 0 29 29"><path d="M0 4h29v19H0z" fill="#2a8ccc" stroke="#9cc8e4"/><circle cx="8" cy="11" r="4" fill="none" stroke="#fff" stroke-width="2"/><path d="M8 7v4h4" stroke="#f0a030" fill="none" stroke-width="2"/><path d="M16 9h9M16 14h9M4 18h6" stroke="#e8f4fb" stroke-width="2"/><ellipse cx="15" cy="25" rx="6" ry="3" fill="#ddd"/></svg></button>
      <button aria-label="Word"><svg viewBox="0 0 29 29"><path d="M9 3h19v24H9z" fill="#f2f6fc" stroke="#7b9ac9"/><path d="M2 2h15v24l-15-3z" fill="#2c5ba8" stroke="#dbe6f5"/><path d="M4 9l3 9 3-9 3 9 3-9" fill="none" stroke="#fff" stroke-width="2"/><path d="M18 8h8M18 12h8M12 21h14M18 16h8" stroke="#3a62a6" stroke-width="2"/></svg></button>
      <button aria-label="Store"><svg viewBox="0 0 29 29"><path d="M1 1h27v27H1z" fill="#0a8a0e"/><path d="M6 10h18v13l-18-2z" fill="#fff"/><path d="M10 10c0-7 8-7 8 0" fill="none" stroke="#fff" stroke-width="2"/><path d="M10 16h8M14 13v7" stroke="#0a8a0e" stroke-width="1.500"/></svg></button>
      <button aria-label="Excel" class="w-[58px]!"><svg viewBox="0 0 29 29"><path d="M10 4h18v23H10z" fill="#f2f8ee" stroke="#5a9a48"/><path d="M1 3l14-1v23L1 22z" fill="#e9f3e3" stroke="#4e9440" stroke-width="2"/><path d="M4 8l8 10M12 7L4 19" stroke="#2f7d32" stroke-width="3"/><path d="M17 10h10M17 15h10M17 20h10M22 6v19" stroke="#5fa350" stroke-width="1.500"/></svg></button>
      <button aria-label="AutoCAD" class="w-14! border border-[#a98790] bg-white/15"><svg viewBox="0 0 29 29"><path d="M0 4h29v14L0 27z" fill="#d6d6d6"/><path d="M11 27h18V14z" fill="#151515"/><path d="M3 21L10 0l11 16-7-2-4 5z" fill="#d9212b"/><path d="M10 0l11 16 1 3-12-10z" fill="#8e1019"/></svg></button>
      <button aria-label="Skype" class="ml-[3px] w-[57px]! border border-[#a98790] bg-white/20"><svg viewBox="0 0 29 29"><circle cx="9" cy="9" r="8" fill="#12a5e8"/><circle cx="20" cy="20" r="8" fill="#12a5e8"/><circle cx="14.500" cy="14.500" r="12" fill="#12a5e8"/><path d="M19 9c-2-3-9-3-9 1s9 3 9 7-7 5-10 1" fill="none" stroke="#fff" stroke-width="3.500"/><circle cx="23" cy="22" r="5" fill="#f4ffec" stroke="#8cc63f"/></svg></button>
      <button aria-label="Robot" class="ml-0.5 w-[52px]! border border-white bg-white/40"><svg viewBox="0 0 29 29"><path d="M0 0h29v29H0z" fill="#efa322"/><path d="M0 15l29-9v23H0z" fill="#f7bf55"/><path d="M8 2h14l-6 8 6 9-5 2-5-7-4 6z" fill="#9a5c08"/><path d="M9 26h11" stroke="#fff" stroke-width="3" stroke-dasharray="2 1"/></svg></button>
      <svg class="ml-[68px] h-[37px]! w-[29px]!" viewBox="0 0 29 37"><path d="M10 0h9v14h-9z" fill="#6f7b77"/><path d="M5 1L2 20c1 5 24 5 25 0L24 1" fill="none" stroke="#3c3436" stroke-width="5"/><path d="M5 1L3 20c1 5 22 5 23 0L24 1" fill="none" stroke="#a89e9b" stroke-width="2.500"/><path d="M7 20h15" stroke="#d0cccb" stroke-width="2"/><path d="M10 29h9v8h-9z" fill="#a9aeb2"/></svg>
    </div>
    <div class="flex h-full items-center gap-[7px] bg-linear-to-r from-[#6d3a49] via-[#77787c] via-25% to-[#7f8387] pr-4 pl-12 font-['Open_Sans','Noto_Sans',sans-serif] text-[10px] text-white [&>svg]:size-4">
      <svg class="mr-[6px] h-4! w-[29px]!" viewBox="0 0 29 16"><path d="M1 1h27v14H1z" fill="#222" stroke="#fff" stroke-width="2"/><path d="M3 5h23M3 9h23M7 3v8M12 3v8M17 3v8M22 3v8M8 12h13" stroke="#fff"/></svg>
      <svg viewBox="0 0 16 16"><path d="M0 0h16v16H0z" fill="#2e8cd0"/><path d="M3 3h4M10 2v5M3 7l3 5M9 9h5v4H9zM12 4h2" fill="none" stroke="#fff" stroke-width="1.500"/></svg>
      <svg viewBox="0 0 16 16"><path d="M1 1h6v6H1z" fill="#f0a030"/><path d="M8 3h7v6H8z" fill="#2a8fd0"/><path d="M1 8h6v7H1z" fill="#2f9a48"/><path d="M8 9h7v6H8z" fill="#d33a2c"/></svg>
      <svg viewBox="0 0 16 16"><path d="M3 2h8l3 11-7 1z" fill="#eafcb0" stroke="#a8d838"/></svg>
      <svg viewBox="0 0 16 16"><path d="M3 1v14" stroke="#fff" stroke-width="2"/><path d="M4 2h6v2h5v6H9V8H4z" fill="#fff" stroke="#444"/></svg>
      <svg viewBox="0 0 16 16"><ellipse cx="8" cy="8" rx="6" ry="8" fill="#0c2e6e"/><path d="M5 5l6 6-3 2V3l3 2-6 6" fill="none" stroke="#fff" stroke-width="1.300"/></svg>
      <svg viewBox="0 0 16 16"><path d="M1 2v4h4V2M3 6v8M8 2h6v12H8z" fill="none" stroke="#fff" stroke-width="1.800"/></svg>
      <svg viewBox="0 0 16 16"><path d="M2 11V2h12v9" fill="none" stroke="#222" stroke-width="1.500"/><path d="M3 13h3M10 13h3" stroke="#eee" stroke-width="3"/></svg>
      <svg viewBox="0 0 16 16"><path d="M2 12v2M5 10v4M8 8v6M11 6v8M14 3v11" stroke="#fff" stroke-width="2.200"/></svg>
      <svg viewBox="0 0 16 16"><path d="M2 1l5 2 3 4 5 6-4 1-5-5-3 5-2-2 3-4z" fill="#161616" stroke="#ddd"/></svg>
      <svg viewBox="0 0 16 16"><path d="M3 5h3l4-4v14l-4-4H3z" fill="#fff" stroke="#444"/><path d="M12 5c2 2 2 4 0 6" fill="none" stroke="#ccc"/></svg>
      <svg viewBox="0 0 16 16"><path d="M3 13c-4-1-2-6 1-5 1-6 8-5 8-1 4 0 4 6 0 6z" fill="#fff"/></svg>
      <svg viewBox="0 0 16 16"><path d="M0 0h16v16H0z" fill="#1e2c18"/><path d="M2 8c4-6 9-5 12-1v6H7C4 12 3 10 2 8z" fill="#72b320"/><circle cx="8" cy="8" r="2" fill="#1e2c18"/></svg>
      <svg viewBox="0 0 16 16"><path d="M1 2h13v4H1z" fill="#e8e8e8"/><path d="M3 9l4 4 7-8" fill="none" stroke="#35b04a" stroke-width="3"/></svg>
      <svg viewBox="0 0 16 16"><circle cx="7" cy="9" r="7" fill="#fff"/><circle cx="7" cy="9" r="5" fill="#cf1f2c"/><path d="M7 0h9v9H7z" fill="#dfe6f5"/><path d="M9 1h6v6H9z" fill="#3a62b0"/></svg>
      <svg viewBox="0 0 16 16"><path d="M1 1h6v10H1z" fill="#555"/><circle cx="10" cy="10" r="6" fill="#1f9a34"/><path d="M7 9l2 3 4-5" fill="none" stroke="#fff" stroke-width="2"/></svg>
      <span class="ml-1.5 w-8">ENG</span>
      <span class="text-center leading-4">13:27<br>26/2/2015</span>
    </div>
  </div>

  <!-- Sections (Bars) window -->
  <section class="absolute top-[94px] right-[29px] w-[357px] border border-[#dcdcdc] bg-[#ebebeb] px-[5px] pb-[5px] [&_button]:border [&_button]:border-[#adadad] [&_button]:bg-linear-to-b [&_button]:from-[#f3f3f3] [&_button]:to-[#e5e5e5] [&_input]:border [&_input]:border-[#adadad] [&_input]:bg-white [&_input]:px-1 [&_input:disabled]:border-[#d4d4d4] [&_input:disabled]:bg-[#f0f0f0] [&_input:disabled]:text-[#888] [&_select]:text-[#222]">
    <div class="flex h-[23px] items-start">
      <h2 class="flex-1 pt-1 pl-[211px] font-['Open_Sans',sans-serif]">Bars</h2>
      <svg class="mt-0.5 mr-1 h-2.5 w-8" viewBox="0 0 32 10"><path d="M3 6h6" stroke="#222" stroke-width="2"/><path d="M22 1h8v6h-8z" fill="none" stroke="#888"/></svg>
      <button aria-label="Close window" class="h-[14px] w-[35px] border-0! bg-[#bcbcbc]! bg-none! text-[9px] leading-3 font-bold text-white">&#10005;</button>
    </div>
    <div class="border border-[#dcdcdc] bg-[#f0f0f0] pt-2.5 pb-1.5">
      <div class="flex items-center justify-end pr-6">
        <input type="text" aria-label="Number" class="mr-6 h-[19px] w-16" />
        <label for="step" class="mr-1.5">Step:</label><input id="step" type="text" value="1" class="h-[18px] w-12" />
      </div>
      <div class="mt-[5px] flex justify-end gap-[7px] pr-2.5"><input type="text" aria-label="Name" disabled value="Beam_I" class="h-4 w-[150px] pl-[28px]!" /><button class="h-[14px] w-6 leading-2">...</button></div>
      <div class="mt-3 mr-[3px] ml-2 border border-[#dcdcdc] pt-2.5 pr-[7px] pb-2.5">
        <div class="flex justify-end gap-0.5"><select aria-label="Bar type" class="h-[18px] w-[150px] border border-[#adadad] bg-[#ececec] pl-3"><option>&nbsp;&nbsp;&nbsp;&nbsp;PURLINS</option></select><button class="mt-0.5 h-[14px] w-6 leading-2">...</button></div>
        <div class="mt-1.5 flex justify-end gap-0.5"><select aria-label="Section" class="h-[18px] w-[150px] border border-[#adadad] bg-[#ececec] pl-[48px]"><option>HEA 220</option></select><button class="mt-0.5 h-[14px] w-6 leading-2">...</button></div>
        <div class="mt-[5px] flex justify-end"><input type="text" aria-label="Material" disabled value="STEEL" class="h-[18px] w-[101px]" /></div>
      </div>
      <div class="mt-3 mr-[3px] ml-2 border border-[#dcdcdc] pt-2.5 pr-5 pb-0.5">
        <div class="flex justify-end"><input type="text" aria-label="Beginning" value="9,66; 6,70" class="h-[18px] w-[150px] pl-[40px]!" /></div>
        <div class="mt-1.5 flex justify-end"><input type="text" aria-label="End" class="h-[18px] w-[150px]" /></div>
        <p class="mt-1.5 ml-[201px]">u</p>
      </div>
      <div class="mt-2.5 mr-[3px] ml-2 flex justify-end gap-1 border border-[#dcdcdc] pt-[7px] pr-3.5 pb-1"><select aria-label="Offset" class="h-[19px] w-[150px] border-2 border-[#adadad] bg-[#ececec] pl-[45px]"><option>None</option></select><button aria-label="Offsets" class="mt-0.5 h-[12px] w-[22px]"></button></div>
      <div class="mt-1.5 flex justify-end gap-3 pr-2 [&>button]:h-[19px] [&>button]:w-[70px]"><button>Close</button><button>Help</button></div>
    </div>
  </section>

  <!-- Calculations window -->
  <section class="absolute top-[483px] right-[29px] w-[356px] border border-[#dcdcdc] bg-[#ebebeb] px-[5px] pb-[3px] [&_button]:border [&_button]:border-[#adadad] [&_button]:bg-linear-to-b [&_button]:from-[#f3f3f3] [&_button]:to-[#e5e5e5] [&_input]:border [&_input]:border-[#adadad] [&_input]:bg-white">
    <div class="flex h-[22px] items-start">
      <h2 class="flex-1 pt-1 pl-[208px] font-['Open_Sans',sans-serif] text-[11px]">C:2009</h2>
      <svg class="mt-1 mr-1 h-2.5 w-8" viewBox="0 0 32 10"><path d="M3 5h6" stroke="#666" stroke-width="2"/><path d="M22 1h8v5h-8z" fill="none" stroke="#888"/></svg>
      <button aria-label="Close window" class="h-[14px] w-[35px] border-0! bg-[#bcbcbc]! bg-none! text-[9px] leading-3 font-bold text-white">&#10005;</button>
    </div>
    <div class="border border-[#dcdcdc] bg-[#f0f0f0] px-1 pt-2.5 pb-1">
      <div class="flex flex-col items-end gap-[7px] border border-[#dcdcdc] pt-2 pr-3.5 pb-2 [&_button]:h-[15px] [&_button]:w-11 [&_input]:h-[18px] [&_input]:w-[150px]">
        <div class="flex items-center gap-[7px]"><input type="text" aria-label="Member verification" value="50 53 55to 68 70t" class="px-0 text-right" /><button>List</button></div>
        <div class="flex items-center gap-[7px]"><input type="text" aria-label="Code group verification" /><button>List</button></div>
        <div class="flex items-center gap-[7px]"><input type="text" aria-label="Code group design" /><button>List</button></div>
        <div class="mr-[51px] flex"><button class="w-[128px]!">Options</button></div>
      </div>
      <div class="mt-1 flex gap-1">
        <div class="flex flex-1 flex-col gap-2 pt-1.5">
          <div class="h-8 border border-[#dcdcdc] pt-2.5 pr-1 text-right"><button aria-label="Optimization" class="h-[14px] w-11"></button></div>
          <div class="flex h-8 items-start justify-between border border-[#dcdcdc] pt-2.5 pr-1 pl-4"><input type="checkbox" aria-label="Save results" class="size-3 appearance-none" /><button aria-label="Loads" class="h-[14px] w-11"></button></div>
        </div>
        <fieldset class="h-[77px] w-[107px] border border-[#dcdcdc] pl-1">
          <legend class="ml-0.5 px-0.5">Limit state</legend>
          <label class="mt-3 flex items-center gap-[3px]"><input type="checkbox" checked class="grid size-3 appearance-none place-content-center border-[#555]! before:text-[11px] checked:before:content-['✔']" />Ultimate</label>
          <label class="mt-3 flex items-center gap-[3px]"><input type="checkbox" class="size-3 appearance-none border-[#555]!" />Serviceability</label>
        </fieldset>
      </div>
      <div class="mt-[6px] flex justify-between [&>button]:h-[19px] [&>button]:w-[70px] [&>button]:whitespace-nowrap"><button class="mr-6">OK</button><button>Configuration</button><button>Calculations</button><button>Help</button></div>
    </div>
  </section>

  <!-- Member Definition dialog -->
  <section role="dialog" aria-label="Member Definition" class="absolute top-24 right-[169px] w-[440px] border border-[#6d6d6d] bg-[#979797] px-1.5 pb-1.5">
    <div class="flex h-[22px] items-start">
      <svg class="mt-0.5 ml-0.5 h-[15px] w-4 bg-[#ccc]" viewBox="0 0 16 15"><path d="M0 4h6v2H4v4h3v3H0v-2h2V6H0z" fill="#111"/><path d="M7 3l7-1v3h-1v5h2l-7 2V9h1V6H6z" fill="#e11" stroke="#600"/></svg>
      <h2 class="flex-1 pt-1 text-center font-['Open_Sans','Noto_Sans',sans-serif] text-[11px] text-[#333]">Member Definition - Parameters - EN 1993-1:2005/AC:2009</h2>
      <button aria-label="Close dialog" class="h-[14px] w-6 bg-[#c75050] text-[9px] leading-3 font-bold text-white">&#10005;</button>
    </div>
    <div class="flex justify-between border border-[#6d6d6d] bg-[#f0f0f0] pt-2.5 pr-2.5 pb-2.5 pl-[7px] [&_button]:border [&_button]:border-[#adadad] [&_button]:bg-linear-to-b [&_button]:from-[#f3f3f3] [&_button]:to-[#e5e5e5] [&_button:disabled]:border-[#d4d4d4] [&_button:disabled]:text-[#8a8a8a] [&_[type=text]]:border [&_[type=text]]:border-[#adadad] [&_[type=text]]:bg-white [&_[type=text]]:px-[3px] [&_[type=text]:disabled]:bg-[#f0f0f0] [&_[type=text]:disabled]:text-[#888] [&_select]:h-[19px] [&_select]:w-12 [&_select]:border [&_select]:border-[#adadad] [&_select]:bg-white [&_select]:text-[#222] [&_select:disabled]:text-[#bbb] [&_[type=checkbox]]:grid [&_[type=checkbox]]:size-[13px] [&_[type=checkbox]]:shrink-0 [&_[type=checkbox]]:appearance-none [&_[type=checkbox]]:place-content-center [&_[type=checkbox]]:border [&_[type=checkbox]]:border-[#555] [&_[type=checkbox]]:bg-white [&_[type=checkbox]:checked]:before:content-['✔'] [&_[type=radio]]:grid [&_[type=radio]]:size-[13px] [&_[type=radio]]:shrink-0 [&_[type=radio]]:appearance-none [&_[type=radio]]:place-content-center [&_[type=radio]]:rounded-full [&_[type=radio]]:border [&_[type=radio]]:border-[#666] [&_[type=radio]]:bg-white [&_[type=radio]:checked]:before:size-[7px] [&_[type=radio]:checked]:before:rounded-full [&_[type=radio]:checked]:before:bg-[#222] [&_[type=radio]:checked]:before:content-['']">
      <div class="w-[329px]">
        <div class="flex h-[28px] items-center border-t border-l border-[#dcdcdc] pl-2.5">
          <label for="mtype" class="w-[78px]">Member type:</label><input id="mtype" type="text" value="PURLINS" class="h-[18px] w-[120px]" />
        </div>

        <div class="grid grid-cols-[161px_166px] gap-x-0.5">
          <fieldset class="h-16 border border-[#dcdcdc] pl-[7px]">
            <legend class="px-px">Buckling (y axis)</legend>
            <p class="mt-1 pl-8">Member length ly:</p>
            <div class="mt-0.5 flex items-center">
              <div class="w-[72px]">
                <label class="flex h-4 items-center gap-0.5"><input type="radio" name="ly" />Real</label>
                <label class="flex h-4 items-center gap-0.5"><input type="radio" name="ly" checked />Coefficient</label>
              </div>
              <input type="text" aria-label="Coefficient ly" value="1.00" class="h-[19px] w-[43px]" />
            </div>
          </fieldset>
          <fieldset class="h-16 border-y border-l border-[#dcdcdc] pl-[7px]">
            <legend class="px-px">Buckling (z axis)</legend>
            <p class="mt-1 pl-8">Member length lz:</p>
            <div class="mt-0.5 flex items-center">
              <div class="w-[73px]">
                <label class="flex h-4 items-center gap-0.5"><input type="radio" name="lz" />Real</label>
                <label class="flex h-4 items-center gap-0.5"><input type="radio" name="lz" checked />Coefficient</label>
              </div>
              <input type="text" aria-label="Coefficient lz" value="1.00" class="h-[19px] w-[43px]" />
            </div>
          </fieldset>
          <div class="border border-t-0 border-[#dcdcdc] pt-1 pb-[7px] pl-[7px]">
            <p class="pl-4">Buckling length coeff. y:</p>
            <div class="mt-[3px] flex items-center gap-2 pl-[31px]">
              <input type="text" aria-label="Buckling length coefficient y" value="1,00" class="h-[18px] w-[43px]" />
              <button aria-label="Buckling diagram y" class="flex h-7 w-[28px] items-center justify-center border-black! bg-[#c3c3c3]! bg-none!"><svg class="h-6 w-6" viewBox="0 0 24 24"><path d="M12 4v12M10 5l2-3 2 3" stroke="#111" fill="none"/><text x="8" y="23" font-size="8">1.0</text></svg></button>
            </div>
            <p class="pl-[97px]">Sway</p>
            <div class="mt-0.5 flex items-start"><label for="cy" class="w-[100px]">Buckling curve y:</label><select id="cy" class="mt-1"><option>auto</option></select></div>
          </div>
          <div class="border-b border-l border-[#dcdcdc] pt-1 pb-[7px] pl-[7px]">
            <p class="pl-4">Buckling length coeff. z:</p>
            <div class="mt-[3px] flex items-center gap-2 pl-[31px]">
              <input type="text" aria-label="Buckling length coefficient z" value="1,00" class="h-[18px] w-[43px]" />
              <button aria-label="Buckling diagram z" class="flex h-7 w-[28px] items-center justify-center border-black! bg-[#c3c3c3]! bg-none!"><svg class="h-6 w-6" viewBox="0 0 24 24"><path d="M2 2l20 20M21 2C14 8 7 14 3 22" stroke="#f01414" stroke-width="2.500" fill="none"/></svg></button>
            </div>
            <p class="pl-[97px]">Sway</p>
            <div class="mt-0.5 flex items-start"><label for="cz" class="w-[98px] pl-0.5">Buckling curve z:</label><select id="cz" class="mt-1"><option>auto</option></select></div>
          </div>
        </div>

        <div class="mt-0.5 flex h-[27px] items-center border-t border-l border-[#dcdcdc] pl-[9px]">
          <label class="flex items-center gap-[3px]"><input type="checkbox" checked />Flexural-torsional buckling</label>
        </div>

        <fieldset class="mt-0.5 h-[141px] border-y border-l border-[#dcdcdc] pl-[7px]">
          <legend class="px-px">Lateral buckling parameters</legend>
          <div class="mt-[3px] grid grid-cols-[101px_47px_88px_75px]">
            <label class="col-span-2 flex h-4 items-center gap-[3px] pl-0.5"><input type="checkbox" checked />Lateral buckling</label>
            <p class="col-span-2 self-center pl-1 whitespace-nowrap">Lateral buckling length coefficient</p>
            <span class="self-center pt-1">Load level:</span>
            <button aria-label="Load level" class="flex h-7 w-[30px] items-center justify-center border-2! border-black! bg-[#c3c3c3]! bg-none!"><svg class="h-5 w-6" viewBox="0 0 24 20"><path d="M9 4h13v2h-5v9h5v2H9v-2h4V6H9z" fill="#111"/><path d="M10 4h12M10 17h12" stroke="#3cc"/><path d="M4 2v8M2 7l2 3 2-3" stroke="#e22" fill="none"/></svg></button>
            <button class="h-[19px] w-[69px] self-center">Upper flange</button>
            <button class="h-[19px] w-[69px] self-center">Lower flange</button>
            <p class="col-start-3 w-[69px] text-center">None</p>
            <p class="w-[69px] text-center">Lcr = lo</p>
            <span class="pt-2">Critical moment:</span>
            <div class="col-span-3 flex items-end justify-between">
              <div>
                <label class="flex h-[18px] items-center gap-[3px]"><input type="radio" name="mcr" checked />Auto</label>
                <label class="flex h-[20px] items-center gap-[3px]"><input type="radio" name="mcr" />User</label>
              </div>
              <div class="flex items-center gap-1.5"><label for="mcr" class="mr-1">Mcr =</label><input id="mcr" type="text" disabled value="1,00" class="h-[18px] w-[43px]" /><span class="w-[30px]">kN*m</span></div>
            </div>
            <label for="lcurve" class="pt-0.5">Lateral buckling<br>curve:</label>
            <select id="lcurve" class="mt-1.5"><option>auto</option></select>
          </div>
        </fieldset>

        <div class="mt-px grid h-[83px] auto-rows-[24px] grid-cols-[184px_75px_49px] items-center border-y border-l border-[#dcdcdc] pt-0.5 pl-[9px]">
          <label class="flex items-center gap-0.5"><input type="radio" name="method" />General method&nbsp;&nbsp; [6.3.2.2]</label>
          <label for="lambda">Lambda LT,0 =</label><select id="lambda"><option>0.4</option></select>
          <label class="flex items-center gap-0.5"><input type="radio" name="method" checked />Detailed method&nbsp;&nbsp; [6.3.2.3]</label>
          <label for="beta">Beta =</label><select id="beta"><option>0.75</option></select>
          <label class="flex items-center gap-0.5"><input type="checkbox" />Simplified method for beams with<br>lateral restraints [6.3.2.4]</label>
          <label for="kfl">kfl =</label><select id="kfl" disabled><option>1.1</option></select>
        </div>

        <fieldset class="mt-0.5 h-[106px] border-b border-l border-[#dcdcdc] pl-[7px]">
          <legend class="px-px">Additional sets of member parameters</legend>
          <div class="mt-[3px] grid auto-rows-[21px] grid-cols-[221px_89px] items-center [&>button]:h-[19px] [&>label]:flex [&>label]:gap-[3px] [&>label]:pl-0.5">
            <label><input type="checkbox" checked />Limit deflections and displacements:</label><button>Service</button>
            <label><input type="checkbox" />Complex sections:</label><button disabled>Complex</button>
            <label><input type="checkbox" />Thin-walled sections:</label><button disabled>Thin-walled</button>
            <label><input type="checkbox" />Fire analysis parameters:</label><button disabled>Fire</button>
          </div>
        </fieldset>
      </div>

      <div class="mt-px flex w-[70px] flex-col [&>button]:h-[19px]">
        <button>Save</button>
        <button class="mt-[7px]">Close</button>
        <button class="mt-44">More...</button>
        <button class="mt-[234px]">Note</button>
        <button class="mt-[35px]">Help</button>
      </div>
    </div>
  </section>
</div>
</body>
</html>
